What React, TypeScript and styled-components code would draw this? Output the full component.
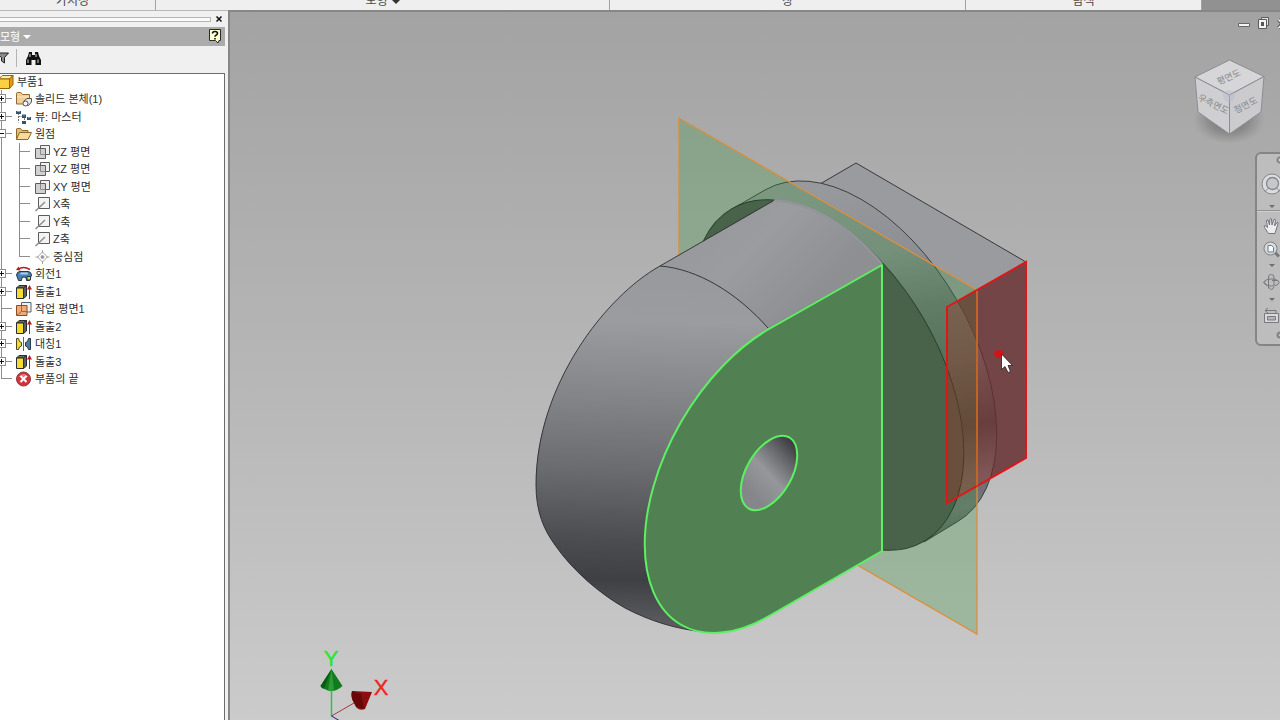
import React, { useState } from 'react';
import styled, { createGlobalStyle, css } from 'styled-components';

const GlobalStyle = createGlobalStyle`
  * { box-sizing: border-box; }
  html, body { margin: 0; padding: 0; height: 100%; }
  body {
    overflow: hidden;
    font-family: "Liberation Sans", "Noto Sans CJK KR", sans-serif;
    font-size: 12px;
    color: #2e2e2e;
  }
  #root { height: 100%; }
  button { padding: 0; border: 0; background: none; font: inherit; color: inherit; }
  svg { display: block; flex: none; }
`;

/* ---------- page frame ---------- */

const Page = styled.div`
  display: flex;
  flex-direction: column;
  height: 100vh;
  background: #f0f0f0;
`;

const Ribbon = styled.header`
  display: flex;
  flex: none;
  height: 10px;
  overflow: hidden;
  background: #919191;
`;

const RibbonPanel = styled.div<{ $basis: number }>`
  display: flex;
  flex: 0 1 ${p => p.$basis}px;
  align-items: flex-end;
  justify-content: center;
  gap: 4px;
  padding-bottom: 2px;
  background: #efefef;
  border-right: 1px solid #a2a2a2;
  line-height: 14px;
  color: #4a4a4a;
  &:first-child { padding-right: 10px; }
  svg { margin-bottom: 4px; }
`;

const Workspace = styled.div`
  display: flex;
  flex: 1;
  min-height: 0;
`;

/* ---------- model browser ---------- */

const Sidebar = styled.aside`
  display: flex;
  flex-direction: column;
  flex: none;
  width: 228px;
  padding-right: 3px;
  border-top: 1px solid #b8b8b8;
  background: #f0f0f0;
`;

const Grip = styled.div`
  display: flex;
  align-items: center;
  justify-content: space-between;
  height: 16px;
  padding-right: 2px;
`;

const GripBar = styled.span`
  flex: 1;
  height: 5px;
  margin-right: 4px;
  border: 1px solid #b4b4b4;
  border-left: 0;
  background: #fafafa;
`;

const CloseButton = styled.button`
  width: 8px;
  height: 12px;
  color: #111;
`;

const TitleBar = styled.div`
  display: flex;
  align-items: center;
  justify-content: space-between;
  height: 19px;
  padding-right: 3px;
  background: #ababab;
`;

const TitleButton = styled.button`
  display: flex;
  align-items: center;
  gap: 3px;
  color: #fff;
  font-size: 11px;
  line-height: 18px;
`;

const Tools = styled.div`
  display: flex;
  align-items: center;
  height: 27px;
  padding-bottom: 3px;
`;

const ToolDivider = styled.span`
  width: 1px;
  height: 18px;
  margin: 0 8px 0 7px;
  background: #b5b5b5;
`;

const Tree = styled.ul`
  flex: 1;
  min-height: 0;
  margin: 0;
  padding: 0;
  list-style: none;
  overflow: hidden;
  background: #fff;
  border-top: 1px solid #6c6c6c;
  border-right: 1px solid #6c6c6c;
`;

const TreeRow = styled.li`
  display: flex;
  align-items: center;
  height: 17px;
  white-space: nowrap;
  &:nth-child(even) { height: 18px; }
  &:first-child { height: 16px; }
`;

const line = '#8d8d8d';

const Guide = styled.span<{ $at: number; $width: number; $last?: boolean; $branch?: boolean }>`
  position: relative;
  flex: none;
  align-self: stretch;
  width: ${p => p.$width}px;
  &::before {
    content: '';
    position: absolute;
    left: ${p => p.$at}px;
    top: 0;
    bottom: ${p => (p.$last ? '50%' : '0')};
    border-left: 1px solid ${line};
  }
  ${p => p.$branch && css`
    &::after {
      content: '';
      position: absolute;
      left: ${p.$at}px;
      top: 8px;
      width: 11px;
      border-top: 1px solid ${line};
    }
  `}
`;

const Expander = styled.button`
  position: absolute;
  z-index: 1;
  left: -3px;
  top: 4px;
  width: 9px;
  height: 9px;
  border: 1px solid #8d8d8d;
  background: #fff;
  svg { width: 7px; height: 7px; }
`;

const RowLabel = styled.span<{ $nested: boolean }>`
  padding-left: ${p => (p.$nested ? 2 : 3)}px;
  font-size: 11px;
  line-height: 16px;
`;

/* ---------- viewport ---------- */

const Viewport = styled.main`
  position: relative;
  flex: 1;
  min-width: 0;
  overflow: hidden;
  border-top: 2px solid #878787;
  border-left: 2px solid #878787;
  background: linear-gradient(#a3a3a3, #b6b6b6 50%, #cbcbcb);
`;

const Scene = styled.svg`
  width: 100%;
  height: 100%;
`;

const Triad = styled.svg`
  position: absolute;
  left: 80px;
  bottom: 0;
`;

const WindowButtons = styled.div`
  position: absolute;
  top: 5px;
  right: -8px;
  display: flex;
  gap: 8px;
`;

const ViewCube = styled.button`
  position: absolute;
  top: 42px;
  right: 8px;
`;

const NavBar = styled.nav`
  position: absolute;
  top: 140px;
  right: -8px;
  display: flex;
  flex-direction: column;
  align-items: center;
  width: 33px;
  height: 194px;
  padding: 2px 0;
  border: 2px solid #858585;
  border-radius: 6px;
  background: #bdbdbd;
`;

const NavButton = styled.button<{ $h: number }>`
  display: flex;
  align-items: center;
  justify-content: center;
  width: 100%;
  height: ${p => p.$h}px;
`;

const NavCorner = styled(NavButton)`
  justify-content: flex-end;
`;

const NavRule = styled.span`
  width: 100%;
  height: 2px;
  border-top: 1px solid #929292;
  background: #cfcfcf;
`;

/* ---------- icons ---------- */

type IconName =
  | 'part' | 'solid' | 'view' | 'folder' | 'plane' | 'axis' | 'point'
  | 'revolve' | 'extrude' | 'workplane' | 'mirror' | 'end';

const drawings: Record<IconName, React.ReactNode> = {
  part: (
    <g stroke="#94630c" strokeLinejoin="round">
      <path d="M0.5 5 4.5 1.5 15 1.5 11.5 5Z" fill="#fff0a0" />
      <path d="M11.5 5 15 1.5V10.5L11.5 14.5Z" fill="#e59a16" />
      <path d="M0.5 5H11.5V14.5H0.5Z" fill="#fcd043" />
    </g>
  ),
  solid: (
    <g strokeLinejoin="round">
      <path d="M0.5 13V2.5Q0.5 1.5 1.5 1.5H5L6.5 3.5H13.5V13Z" fill="#f0cf94" stroke="#8d6c36" />
      <path d="M1 6H13" stroke="#fbe8c0" />
      <path d="M8 10 11 7.500 15.500 7.500 15.500 11 12.500 14.500H8Z" fill="#e6e6e6" stroke="#555" />
      <circle cx="9.500" cy="12.500" r="2.500" fill="#f6f6f6" stroke="#555" />
    </g>
  ),
  view: (
    <g>
      <path d="M2.500 4V13.500M2.500 7.500H7M8.500 9V13.500H10" stroke="#777" fill="none" strokeDasharray="2 1" />
      <path d="M0 2H5V5H0ZM6 5.500H10V9H6ZM11 8H15V11H11ZM6 12H10V15H6Z" fill="#35536e" />
      <path d="M1 2.500H4M7 6H9M12 8.500H14" stroke="#87aac4" />
    </g>
  ),
  folder: (
    <g stroke="#8a6a2c" strokeLinejoin="round">
      <path d="M0.500 13.500V3Q0.500 2.500 1.500 2.500H4.500L6 4.500H12V7" fill="#e5bd74" />
      <path d="M0.500 13.500 3.500 6.500H15.500L12 13.500Z" fill="#f8dc9b" />
    </g>
  ),
  plane: (
    <g stroke="#5d5d5d">
      <path d="M5.500 1.500H14.500V10.500H5.500Z" fill="#f2f2f2" />
      <path d="M0.500 4.500H10.500V14.500H0.500Z" fill="#c9c9c9" fillOpacity="0.85" />
      <path d="M5.500 5V10.500H10.500" fill="none" stroke="#8e8e8e" />
    </g>
  ),
  axis: (
    <g>
      <path d="M3.500 1.500H14.500V12.500H3.500Z" fill="#f3f3f3" stroke="#5d5d5d" />
      <path d="M0.500 15 10 6" stroke="#8c8c8c" strokeWidth="1.500" />
    </g>
  ),
  point: (
    <g fill="none" stroke="#a4a4a4">
      <path d="M7.500 3 12.500 8 7.500 13 2.500 8Z" />
      <path d="M7.500 1V4M7.500 12V15M0.500 8H4M11 8H14.500" />
      <circle cx="7.500" cy="8" r="1.500" fill="#8d8d8d" />
    </g>
  ),
  revolve: (
    <g strokeLinejoin="round">
      <path d="M0.500 9Q1 5.500 4 5.500H12Q15 5.500 15.500 9L13.500 14.500H10.500L10 11.500Q8 10.500 6 11.500L5.500 14.500H2.500Z" fill="#4b7fae" stroke="#22384d" />
      <path d="M5 6.500H11.500L12 8.500H4Z" fill="#a9d0ef" />
      <path d="M11 10.500H14.500V14H11Z" fill="#e9cf54" stroke="#22384d" />
      <path d="M2 3.500Q7 -0.500 14 3.500" fill="none" stroke="#b01f1f" strokeWidth="1.500" />
      <path d="M0 4 2.500 0.500 4.500 4.500Z" fill="#b01f1f" />
    </g>
  ),
  extrude: (
    <g strokeLinejoin="round">
      <path d="M0.500 4 3 1.500H10.500L7.500 4Z" fill="#6d6d6d" stroke="#2c2c2c" />
      <path d="M7.500 4 10.500 1.500V12L7.500 14.500Z" fill="#52606c" stroke="#2c2c2c" />
      <path d="M0.500 4H7.500V14.500H0.500Z" fill="#f3dc2d" stroke="#2c2c2c" />
      <path d="M13.500 3V15" stroke="#b01f1f" />
      <path d="M11 5.500 13.500 1 16 5.500Z" fill="#b01f1f" />
    </g>
  ),
  workplane: (
    <g>
      <path d="M5.500 1.500H15V11H5.500Z" fill="#f1f1f1" stroke="#56606b" />
      <path d="M0.500 4.500H11V14.500H0.500Z" fill="#efab7a" stroke="#8d4d22" />
      <path d="M5.500 5V10.500H11M1 14 5.500 10.500" fill="none" stroke="#a8683c" />
    </g>
  ),
  mirror: (
    <g strokeLinejoin="round">
      <path d="M0.500 2.500H2.500L3.500 5.500 5.500 6.500V10L3.500 11 2.500 13.500H0.500Z" fill="#f3dc2d" stroke="#4d4720" />
      <path d="M14.500 2.500H12.500L11.500 5.500 9.500 6.500V10L11.500 11 12.500 13.500H14.500Z" fill="#56799a" stroke="#26394c" />
      <path d="M7.500 1V15" stroke="#c43a3a" />
    </g>
  ),
  end: (
    <g>
      <circle cx="7.500" cy="8" r="7" fill="#d2333a" stroke="#8e3a3d" />
      <path d="M2.500 6Q7.500 0 12.500 6" fill="#e77a7e" />
      <path d="M4.500 5 10.500 11M10.500 5 4.500 11" stroke="#fff" strokeWidth="2" />
    </g>
  ),
};

const TreeIcon = ({ name }: { name: IconName }) => (
  <svg width="16" height="16" viewBox="0 0 16 16" fill="none" aria-hidden="true">{drawings[name]}</svg>
);

const Caret = ({ color = '#6f6f6f', size = 6 }: { color?: string; size?: number }) => (
  <svg width={size} height={size / 2} viewBox="0 0 8 4" aria-hidden="true"><path d="M0 0H8L4 4Z" fill={color} /></svg>
);

const FilterIcon = () => (
  <svg width="9" height="14" viewBox="0 0 9 14" aria-hidden="true">
    <path d="M-4 2H8.500L4.500 6.500V12L1.500 10V6.500Z" fill="#8c8c8c" stroke="#222" />
  </svg>
);

const FindIcon = () => (
  <svg width="17" height="15" viewBox="0 0 17 15" aria-hidden="true">
    <path d="M4 1H7V4H10V1H13L14 5 16 9V14H10.500V9H6.500V14H1V9L3 5Z" fill="#111" />
    <path d="M5 3V6M3 8.500V12M11 3V6M13 8.500V12" stroke="#d9d9d9" />
  </svg>
);

const HelpIcon = () => (
  <svg width="14" height="15" viewBox="0 0 14 15" aria-hidden="true">
    <path d="M1.500 0.500H12.500V11.500H11L10 14 7.500 11.500H1.500Z" fill="#ffffcf" stroke="#2a2a2a" />
    <path d="M4.500 4.500Q4.500 2.500 7 2.500T9.500 4.500Q9.500 5.500 8 6.200 7 6.700 7 7.800M7 9V10.500" fill="none" stroke="#111" strokeWidth="1.600" />
  </svg>
);

/* ---------- tree data ---------- */

interface Node {
  label: string;
  icon: IconName;
  level: 0 | 1 | 2;
  expand?: 'open' | 'closed';
  last?: boolean;
}

const nodes: Node[] = [
  { label: '부품1', icon: 'part', level: 0 },
  { label: '솔리드 본체(1)', icon: 'solid', level: 1, expand: 'closed' },
  { label: '뷰: 마스터', icon: 'view', level: 1, expand: 'closed' },
  { label: '원점', icon: 'folder', level: 1, expand: 'open' },
  { label: 'YZ 평면', icon: 'plane', level: 2 },
  { label: 'XZ 평면', icon: 'plane', level: 2 },
  { label: 'XY 평면', icon: 'plane', level: 2 },
  { label: 'X축', icon: 'axis', level: 2 },
  { label: 'Y축', icon: 'axis', level: 2 },
  { label: 'Z축', icon: 'axis', level: 2 },
  { label: '중심점', icon: 'point', level: 2, last: true },
  { label: '회전1', icon: 'revolve', level: 1, expand: 'closed' },
  { label: '돌출1', icon: 'extrude', level: 1, expand: 'closed' },
  { label: '작업 평면1', icon: 'workplane', level: 1 },
  { label: '돌출2', icon: 'extrude', level: 1, expand: 'closed' },
  { label: '대칭1', icon: 'mirror', level: 1, expand: 'closed' },
  { label: '돌출3', icon: 'extrude', level: 1, expand: 'closed' },
  { label: '부품의 끝', icon: 'end', level: 1, last: true },
];

const RootIcon = styled.span`
  margin-left: -2px;
`;

const TreeNode = ({ node, hidden, onToggle }: { node: Node; hidden: boolean; onToggle: () => void }) => {
  if (hidden) return null;
  const { level, expand, last, icon, label } = node;
  return (
    <TreeRow role="treeitem" aria-level={level + 1}>
      {level === 0 && <RootIcon><TreeIcon name={icon} /></RootIcon>}
      {level === 1 && (
        <Guide $at={1} $width={16} $last={last} $branch>
          {expand && (
            <Expander aria-label={label} onClick={onToggle}>
              <svg viewBox="0 0 7 7" aria-hidden="true">
                <path d={expand === 'closed' ? 'M1 3.500H6M3.500 1V6' : 'M1 3.500H6'} stroke="#111" />
              </svg>
            </Expander>
          )}
        </Guide>
      )}
      {level === 2 && (
        <>
          <Guide $at={1} $width={16} />
          <Guide $at={3} $width={19} $last={last} $branch />
        </>
      )}
      {level > 0 && <TreeIcon name={icon} />}
      <RowLabel $nested={level === 2}>{label}</RowLabel>
    </TreeRow>
  );
};

/* ---------- part drawing ---------- */

const silhouette =
  'C606 296 536 385 536 485C536 512 544 530 555 545C572 570 600 594 625 608C650 621 675 629 705 632';

const PartScene = () => (
  <Scene viewBox="230 12 1050 708" preserveAspectRatio="xMidYMid meet" role="img" aria-label="부품1">
    <defs>
      <linearGradient id="rim" gradientUnits="userSpaceOnUse" x1="850" y1="185" x2="900" y2="545">
        <stop offset="0" stopColor="#98999d" />
        <stop offset="0.2" stopColor="#8e8f94" />
        <stop offset="0.36" stopColor="#737478" />
        <stop offset="0.5" stopColor="#66676b" />
        <stop offset="0.7" stopColor="#48494c" />
        <stop offset="0.84" stopColor="#6a6b70" />
        <stop offset="0.92" stopColor="#77787d" />
        <stop offset="1" stopColor="#5f6064" />
      </linearGradient>
      <linearGradient id="round" gradientUnits="userSpaceOnUse" x1="660" y1="266" x2="650" y2="632">
        <stop offset="0" stopColor="#98999d" />
        <stop offset="0.15" stopColor="#9b9c9f" />
        <stop offset="0.35" stopColor="#85868a" />
        <stop offset="0.55" stopColor="#6c6d70" />
        <stop offset="0.75" stopColor="#4c4d50" />
        <stop offset="0.86" stopColor="#3f4043" />
        <stop offset="1" stopColor="#606164" />
      </linearGradient>
      <linearGradient id="barrel" gradientUnits="userSpaceOnUse" x1="700" y1="230" x2="790" y2="320">
        <stop offset="0" stopColor="#98999d" />
        <stop offset="0.4" stopColor="#9b9c9f" />
        <stop offset="1" stopColor="#8e8f93" />
      </linearGradient>
      <linearGradient id="hole" gradientUnits="userSpaceOnUse" x1="796" y1="446" x2="748" y2="490">
        <stop offset="0" stopColor="#3c3c40" />
        <stop offset="0.25" stopColor="#646569" />
        <stop offset="0.6" stopColor="#96979b" />
        <stop offset="1" stopColor="#85868a" />
      </linearGradient>
    </defs>

    {/* square block behind the flange */}
    <path d="M820 184 856 163 1026 262 946 307Z" fill="#9a9b9f" />
    <path d="M946 307 1026 262V458L946 504Z" fill="#58535a" />
    <path d="M820 184 856 163 1026 262" fill="none" stroke="#2d2d30" strokeWidth="0.900" />

    {/* flange: rim band, then front disc */}
    <path d="M732 209 765 190A190 110 60 0 1 957 522L924 542Z" fill="url(#rim)" stroke="#333336" strokeWidth="0.900" />
    <ellipse cx="828" cy="375" rx="192" ry="111" transform="rotate(60 828 375)" fill="#535254" stroke="#222" strokeWidth="0.900" />

    {/* work plane */}
    <path d="M679 118 977 290V634L679 462Z" fill="#309432" fillOpacity="0.27" stroke="#dd8f3c" strokeWidth="1.300" />

    {/* rounded body */}
    <path d={`M769 616 882 551V265L768 328C737 293 698 269 660 266${silhouette}Z`} fill="url(#round)" />
    <path d="M660 266 773 201C812 202 850 228 882 265L768 328C737 293 698 269 660 266Z" fill="url(#barrel)" />
    <path d="M774 200.500C812 202 851 228 882 264" fill="none" stroke="#94959a" strokeWidth="2.400" />
    <path d={`M773 201 660 266${silhouette}`} fill="none" stroke="#2d2d30" strokeWidth="0.900" />
    <path d="M660 266C698 269 737 293 768 328" fill="none" stroke="#2d2d30" strokeWidth="0.900" />

    {/* selected face with its hole */}
    <path d="M882 265 769 329A175 101 -60 0 0 769 616L882 551Z" fill="#518153" stroke="#5cf062" strokeWidth="2" strokeLinejoin="round" />
    <path d="M789.500 437.500A41 23 -60 0 1 748.500 508.500A41 23 -60 0 1 789.500 437.500Z" fill="url(#hole)" stroke="#5cf062" strokeWidth="2" />

    {/* highlighted block face */}
    <path d="M947 307 1026 262V458L947 503Z" fill="#b4231e" fillOpacity="0.3" stroke="#e01616" strokeWidth="2" />
    <path d="M977 291V486" stroke="#c9661f" strokeWidth="1.400" />
    <ellipse cx="999" cy="354" rx="5" ry="4" fill="#d41318" />
    <path d="M1001.500 354V369.500L1005 366.500 1008 372.500 1010.500 371.500 1008 365.500H1012.500Z" fill="#fff" stroke="#222" strokeWidth="0.800" />
  </Scene>
);

const AxisTriad = () => (
  <Triad width="90" height="80" viewBox="310 640 90 80" aria-hidden="true">
    <path d="M331.500 716V688" stroke="#2fc04a" strokeWidth="1.500" />
    <path d="M331.500 716 354 703" stroke="#a03a3a" />
    <path d="M331.500 716 340 721" stroke="#23237a" />
    <path d="M331.500 669 342.500 686Q337 691 331.500 691T320.500 686Z" fill="#0f7d1b" />
    <path d="M331.500 669 324 689Q321 688 320.500 686Z" fill="#0a5c12" />
    <path d="M331.500 669 334 690.500Q331 691.500 328 690.500Z" fill="#2c9c38" />
    <path d="M352 691 372 692 365 709Q357 712 354 703Q350 697 352 691Z" fill="#8a0e10" />
    <path d="M352 691 361 694 364 709 357 707Q350 699 352 691Z" fill="#680708" />
    <g fontFamily="Liberation Sans, sans-serif" fontSize="22" textAnchor="middle">
      <text x="331" y="666" fill="#27e62c" stroke="#27e62c" strokeWidth="0.400">Y</text>
      <text x="381" y="695" fill="#ee2424" stroke="#ee2424" strokeWidth="0.400">X</text>
    </g>
  </Triad>
);

const CubeDrawing = () => (
  <svg width="86" height="96" viewBox="1186 54 86 96" aria-hidden="true">
    <defs>
      <radialGradient id="cubeShadow">
        <stop offset="0" stopColor="#555" stopOpacity="0.8" />
        <stop offset="0.6" stopColor="#666" stopOpacity="0.4" />
        <stop offset="1" stopColor="#777" stopOpacity="0" />
      </radialGradient>
    </defs>
    <ellipse cx="1229" cy="120" rx="36" ry="24" fill="url(#cubeShadow)" />
    <g stroke="#8b8d92" strokeLinejoin="round">
      <path d="M1229.500 60 1264 76.500 1229.500 95 1195 77Z" fill="#d6d6d8" />
      <path d="M1195 77 1229.500 95V134L1198 112Z" fill="#cfcfd1" />
      <path d="M1264 76.500 1229.500 95V134L1261 112Z" fill="#cbcbcd" />
    </g>
    <circle cx="1229" cy="96" r="6" fill="#b3b8cc" fillOpacity="0.4" />
    <g fontFamily="Noto Sans CJK KR, sans-serif" fontSize="9" fill="#85888d" textAnchor="middle">
      <text transform="translate(1230 80) rotate(-24)">평면도</text>
      <text transform="translate(1212 107) rotate(27)">우측면도</text>
      <text transform="translate(1247 108) rotate(-27)">정면도</text>
    </g>
  </svg>
);

const Navigation = () => (
  <NavBar aria-label="탐색 막대">
    <NavCorner $h={9} aria-label="닫기">
      <svg width="10" height="9" viewBox="0 0 10 9"><circle cx="4" cy="4" r="3.500" fill="#858585" /><path d="M2.500 2.500 5.500 5.500M5.500 2.500 2.500 5.500" stroke="#e5e5e5" /></svg>
    </NavCorner>
    <NavButton $h={38} aria-label="탐색 휠">
      <svg width="22" height="22" viewBox="0 0 22 22" fill="none">
        <circle cx="11" cy="11" r="10" fill="#dcdcde" stroke="#85878c" />
        <circle cx="11.500" cy="10.500" r="6" fill="#c6c7ca" stroke="#85878c" strokeWidth="1.300" />
        <path d="M7.500 15 4 18.500M15.500 15 19 18.500" stroke="#85878c" />
      </svg>
    </NavButton>
    <NavButton $h={7} aria-label="휠 옵션"><Caret /></NavButton>
    <NavRule />
    <NavButton $h={28} aria-label="초점이동">
      <svg width="18" height="18" viewBox="0 0 18 18">
        <path d="M5.500 16.500 1.500 10.500Q0.500 8.500 2 8.500L4.500 10.500 3.500 4Q3.500 2.500 5 3L6.500 8 7 2Q7.500 0.500 8.500 2L9 8 11 2.500Q12.500 1.500 12.500 3.500L11.500 9 14 5.500Q15.500 5 15 7L13 13 12 16.500Z" fill="#ececec" stroke="#72747a" />
      </svg>
    </NavButton>
    <NavButton $h={20} aria-label="줌">
      <svg width="18" height="18" viewBox="0 0 18 18">
        <path d="M11.500 11 16 15.500" stroke="#77797e" strokeWidth="3" />
        <circle cx="7.500" cy="7.500" r="6.500" fill="#d6dadd" stroke="#7c7e84" />
        <path d="M5 4.500H8.500L10.500 6.500V11H5Z" fill="#fafafa" stroke="#6a7b88" />
      </svg>
    </NavButton>
    <NavButton $h={10} aria-label="줌 옵션"><Caret /></NavButton>
    <NavButton $h={24} aria-label="궤도">
      <svg width="18" height="18" viewBox="0 0 18 18" fill="none" stroke="#77797e">
        <ellipse cx="8.500" cy="9.500" rx="7.500" ry="3.500" />
        <path d="M5.500 15.500V4Q5.500 1.500 8.500 1.500T11 5V12M8.500 17 5.500 14M8.500 17 11 14M9 7.500H14" />
        <path d="M3 7.500 0.500 9.500 4 12" />
      </svg>
    </NavButton>
    <NavButton $h={10} aria-label="궤도 옵션"><Caret /></NavButton>
    <NavButton $h={24} aria-label="면 보기">
      <svg width="18" height="18" viewBox="0 0 18 18" fill="none" stroke="#77797e">
        <path d="M1.500 6.500H15.500V15.500H1.500Z" fill="#d9d9db" />
        <path d="M4.500 9.500H12.500V13H4.500Z" fill="#b5b6ba" />
        <path d="M2 3.500H13V6M2 3.500 5 1M2 3.500 5 6" />
      </svg>
    </NavButton>
    <NavCorner $h={14} aria-label="사용자화">
      <svg width="10" height="9" viewBox="0 0 10 9"><circle cx="4" cy="4" r="3.500" fill="#858585" /><path d="M2.500 3.500H5.500L4 5.500Z" fill="#e5e5e5" /></svg>
    </NavCorner>
  </NavBar>
);

export default function App() {
  const [originOpen, setOriginOpen] = useState(true);
  return (
    <Page>
      <GlobalStyle />
      <Ribbon>
        <RibbonPanel $basis={156}>가시성</RibbonPanel>
        <RibbonPanel $basis={454}>모형 <Caret color="#333" size={8} /></RibbonPanel>
        <RibbonPanel $basis={356}>창</RibbonPanel>
        <RibbonPanel $basis={236}>탐색</RibbonPanel>
      </Ribbon>
      <Workspace>
        <Sidebar>
          <Grip>
            <GripBar />
            <CloseButton aria-label="닫기">
              <svg width="8" height="12" viewBox="0 0 8 12"><path d="M1.500 3.500 6.500 8.500M6.500 3.500 1.500 8.500" stroke="#111" strokeWidth="1.500" /></svg>
            </CloseButton>
          </Grip>
          <TitleBar>
            <TitleButton>모형 <Caret color="#fff" size={8} /></TitleButton>
            <button aria-label="도움말"><HelpIcon /></button>
          </TitleBar>
          <Tools>
            <button aria-label="필터"><FilterIcon /></button>
            <ToolDivider />
            <button aria-label="찾기"><FindIcon /></button>
          </Tools>
          <Tree role="tree">
            {nodes.map(node => (
              <TreeNode
                key={node.label}
                node={{ ...node, expand: node.icon === 'folder' ? (originOpen ? 'open' : 'closed') : node.expand }}
                hidden={node.level === 2 && !originOpen}
                onToggle={() => node.icon === 'folder' && setOriginOpen(!originOpen)}
              />
            ))}
          </Tree>
        </Sidebar>
        <Viewport>
          <PartScene />
          <AxisTriad />
          <WindowButtons>
            <button aria-label="최소화">
              <svg width="12" height="14" viewBox="0 0 12 14"><path d="M0.500 6.500H11.500V9.500H0.500Z" fill="#f4f4f4" stroke="#666" /></svg>
            </button>
            <button aria-label="복원">
              <svg width="11" height="14" viewBox="0 0 11 14"><path d="M3.500 0.500H10.500V8.500H3.500Z" fill="#e4e4e4" stroke="#5c5c5c" /><path d="M0.500 2.500H8.500V11.500H0.500Z" fill="#f4f4f4" stroke="#5c5c5c" /><path d="M3 5H6V9H3Z" fill="#555" /></svg>
            </button>
            <button aria-label="문서 닫기">
              <svg width="11" height="14" viewBox="0 0 11 14"><path d="M1.500 2.500 9 11M9 2.500 1.500 11" stroke="#555" strokeWidth="3.500" /><path d="M1.500 2.500 9 11M9 2.500 1.500 11" stroke="#f4f4f4" strokeWidth="1.500" /></svg>
            </button>
          </WindowButtons>
          <ViewCube aria-label="뷰 큐브"><CubeDrawing /></ViewCube>
          <Navigation />
        </Viewport>
      </Workspace>
    </Page>
  );
}
